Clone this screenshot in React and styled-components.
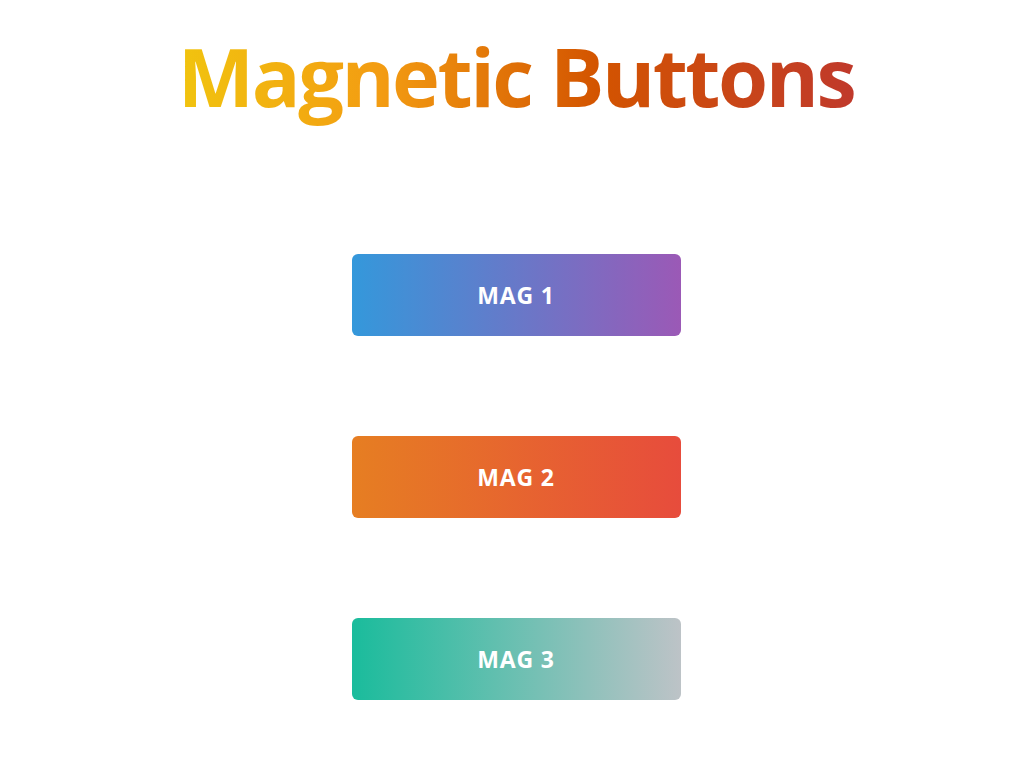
import React from "react";
import styled, { createGlobalStyle } from "styled-components";

const Global = createGlobalStyle`
  html, body { margin: 0; padding: 0; background: #ffffff; }
  body { font-family: "Open Sans", "Noto Sans", sans-serif; }
`;

const Page = styled.main`
  display: flex;
  flex-direction: column;
  align-items: center;
  padding: 21px 0 0 16px;
`;

const Title = styled.h1`
  margin: 0;
  font-size: 81px;
  line-height: 110px;
  font-weight: 700;
  letter-spacing: -2.5px;
  background: linear-gradient(90deg, #f1c40f 0%, #f39c12 30%, #d35400 62%, #c0392b 100%);
  -webkit-background-clip: text;
  background-clip: text;
  color: transparent;
`;

const Stack = styled.div`
  display: flex;
  flex-direction: column;
  gap: 100px;
  margin-top: 123px;
`;

const MagButton = styled.button`
  width: 329px;
  height: 82px;
  border: none;
  border-radius: 6px;
  background: linear-gradient(90deg, ${(p) => p.$from}, ${(p) => p.$to});
  color: #ffffff;
  font-family: "Open Sans", "Noto Sans", sans-serif;
  font-size: 23px;
  font-weight: 700;
  letter-spacing: 0.8px;
  padding: 0;
  cursor: pointer;
`;

const buttons = [
  { label: "MAG 1", from: "#3498db", to: "#9b59b6" },
  { label: "MAG 2", from: "#e67e22", to: "#e74c3c" },
  { label: "MAG 3", from: "#1abc9c", to: "#bdc3c7" },
];

export default function App() {
  return (
    <Page>
      <Global />
      <Title>Magnetic Buttons</Title>
      <Stack>
        {buttons.map((b) => (
          <MagButton key={b.label} $from={b.from} $to={b.to}>
            {b.label}
          </MagButton>
        ))}
      </Stack>
    </Page>
  );
}
